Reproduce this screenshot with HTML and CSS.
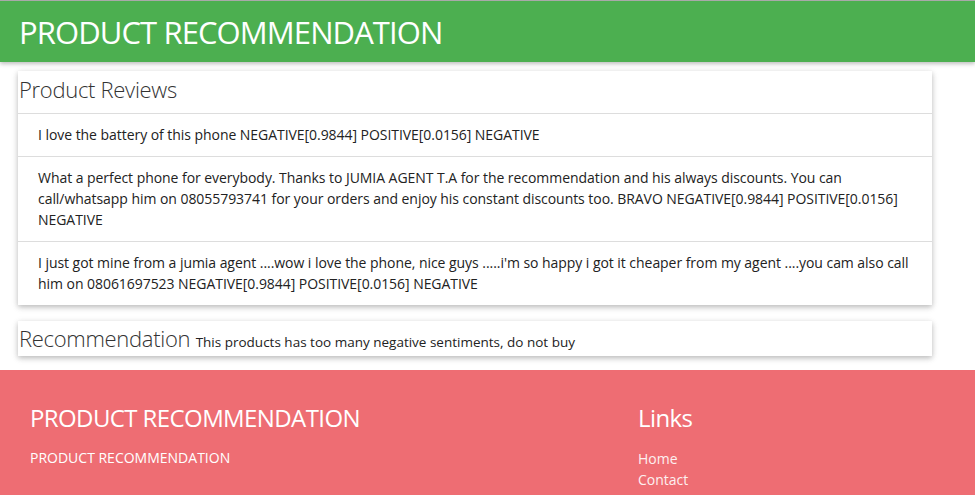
FILE: index.html
```html
<!DOCTYPE html>
<html lang="en">
<head>
    <meta charset="UTF-8">
    <meta name="viewport" content="width=device-width, initial-scale=1.0">
    <title>Product Recommendation</title>
    <link rel="stylesheet" href="styles.css">
</head>
<body>
    <header class="topbar">
        <h1>PRODUCT RECOMMENDATION</h1>
    </header>

    <main class="content">
        <section class="card">
            <h3 class="card-title">Product Reviews</h3>
            <ul class="review-list">
                <li>I love the battery of this phone NEGATIVE[0.9844] POSITIVE[0.0156] NEGATIVE</li>
                <li>What a perfect phone for everybody. Thanks to JUMIA AGENT T.A for the recommendation and his always discounts. You can call/whatsapp him on 08055793741 for your orders and enjoy his constant discounts too. BRAVO NEGATIVE[0.9844] POSITIVE[0.0156] NEGATIVE</li>
                <li>I just got mine from a jumia agent ....wow i love the phone, nice guys .....i'm so happy i got it cheaper from my agent ....you cam also call him on 08061697523 NEGATIVE[0.9844] POSITIVE[0.0156] NEGATIVE</li>
            </ul>
        </section>

        <section class="card">
            <h3 class="card-title">Recommendation <span class="verdict">This products has too many negative sentiments, do not buy</span></h3>
        </section>
    </main>

    <footer class="footer">
        <div class="footer-col">
            <h2>PRODUCT RECOMMENDATION</h2>
            <p>PRODUCT RECOMMENDATION</p>
        </div>
        <div class="footer-col">
            <h2>Links</h2>
            <a href="#">Home</a>
            <a href="#">Contact</a>
        </div>
    </footer>
</body>
</html>
```

FILE: styles.css
```css
/* page */
body {
    margin: 0;
    border-top: 1px solid #a9a9a9;
    font-family: "Open Sans", Arial, sans-serif;
    font-size: 14px;
    color: #222;
    background: #fff;
}
h1, h2, h3 {
    margin: 0;
    font-weight: 400;
}

/* top bar */
.topbar {
    height: 61px;
    padding-left: 19px;
    background-color: #4CAF50;
    box-shadow: 0 2px 4px rgba(0, 0, 0, 0.25);
    color: #fff;
    display: flex;
    align-items: center;
}
.topbar h1 {
    font-size: 31px;
    letter-spacing: -0.9px;
}

/* cards */
.content {
    padding: 9px 0 14px 18px;
    display: flex;
    flex-direction: column;
    gap: 16px;
}
.card {
    width: 914px;
    background: #fff;
    box-shadow: 0 2px 5px 0 rgba(0, 0, 0, 0.2), 0 2px 8px 0 rgba(0, 0, 0, 0.1);
}
.card-title {
    padding: 0 0 6px 1px;
    line-height: 36px;
    font-size: 22px;
    font-weight: 300;
    color: #333;
    letter-spacing: -0.3px;
}
.card:last-child .card-title {
    padding-bottom: 0;
    line-height: 35px;
    height: 35px;
}
.verdict {
    font-size: 13.5px;
    line-height: 1;
    font-weight: 400;
    color: #222;
    letter-spacing: 0;
}

.review-list {
    list-style: none;
    margin: 0;
    padding: 0;
}
.review-list li {
    border-top: 1px solid #ddd;
    padding: 10px 20px 11px;
    line-height: 21px;
    letter-spacing: -0.05px;
}

/* footer */
.footer {
    display: grid;
    grid-template-columns: 608px 1fr;
    padding: 30px 0 30px 30px;
    background-color: #ee6d73;
    color: #fff;
}
.footer h2 {
    font-size: 24px;
    line-height: 36px;
    letter-spacing: -0.6px;
}
.footer p {
    margin: 12px 0 0;
    font-size: 14px;
}
.footer a {
    display: block;
    color: #fdf0f0;
    text-decoration: none;
    line-height: 21px;
}
.footer h2 + a {
    margin-top: 12px;
}
```
